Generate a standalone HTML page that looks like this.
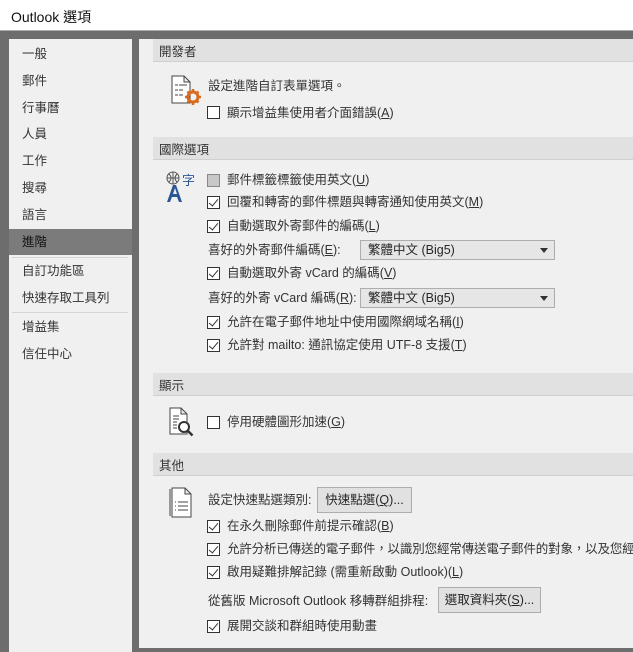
<!DOCTYPE html>
<html><head><meta charset="utf-8"><style>
*{margin:0;padding:0;box-sizing:border-box}
body{width:633px;height:652px;background:#6d6d6d;font-family:"Liberation Sans","Noto Sans CJK TC",sans-serif;font-size:12.5px;color:#262626;position:relative;overflow:hidden}
.abs{position:absolute;white-space:nowrap}
#title{left:0;top:0;width:633px;height:31px;background:#fff;border-bottom:1px solid #aaa}
#title span{position:absolute;left:11px;top:7px;font-size:14px;color:#111}
#side{left:9px;top:39px;width:123px;height:613px;background:#f0f0f0}
.si{position:absolute;left:13px;line-height:16px;color:#333}
#main{left:139px;top:39px;width:494px;height:609px;background:#f0f0f0;overflow:hidden}
.hd{position:absolute;left:14px;width:480px;height:23px;background:#e1e1e1;border-bottom:1px solid #d0d0d0;padding:2px 0 0 6px;color:#333}
.cb{position:absolute;width:13px;height:13px;border:1px solid #333;background:#fff}
.cb.on::after{content:"";position:absolute;left:3px;top:0px;width:4px;height:8px;border:solid #333;border-width:0 1.5px 1.5px 0;transform:rotate(40deg)}
.t{position:absolute;line-height:16px;white-space:nowrap;color:#333}
.dd{position:absolute;left:221px;width:195px;height:20px;background:#e6e6e6;border:1px solid #adadad;padding:0 0 0 7px;line-height:18px}
.dd::after{content:"";position:absolute;right:6px;top:7px;border:4px solid transparent;border-top:5px solid #333}
.btn{position:absolute;background:#e1e1e1;border:1px solid #adadad;text-align:center;line-height:24px}
</style></head><body>
<div id="title" class="abs"><span>Outlook 選項</span></div>
<div id="side" class="abs">
<div class="si" style="top:7px">一般</div>
<div class="si" style="top:34px">郵件</div>
<div class="si" style="top:61px">行事曆</div>
<div class="si" style="top:87px">人員</div>
<div class="si" style="top:114px">工作</div>
<div class="si" style="top:141px">搜尋</div>
<div class="si" style="top:168px">語言</div>
<div style="position:absolute;left:0;top:190px;width:123px;height:26px;background:#7b7b7b"></div>
<div class="si" style="top:195px;color:#111">進階</div>
<div style="position:absolute;left:3px;top:218px;width:116px;height:1px;background:#d4d4d4"></div>
<div class="si" style="top:224px">自訂功能區</div>
<div class="si" style="top:251px">快速存取工具列</div>
<div style="position:absolute;left:3px;top:273px;width:116px;height:1px;background:#d4d4d4"></div>
<div class="si" style="top:280px">增益集</div>
<div class="si" style="top:307px">信任中心</div>
</div>
<div id="main" class="abs">
<div class="hd" style="top:0">開發者</div>
<svg style="position:absolute;left:31px;top:36px" width="35" height="32" viewBox="0 0 35 32"><path d="M2 1h12l6 6v21H2z M14 1v6h6" fill="#fff" stroke="#444"/><path d="M5 10h3M5 15h3M5 20h3M9 10h8M9 15h4M9 20h4" stroke="#444"/><circle cx="23" cy="22" r="5" fill="none" stroke="#d86b1e" stroke-width="3"/><path d="M23 14v3M23 27v3M15 22h3M28 22h3M17.5 16.5l2 2M26.5 25.5l2 2M17.5 27.5l2-2M26.5 18.5l2-2" stroke="#d86b1e" stroke-width="2.5"/></svg>
<div class="t" style="left:69px;top:39px">設定進階自訂表單選項。</div>
<div class="cb" style="left:68px;top:67px"></div><div class="t" style="left:88px;top:66px">顯示增益集使用者介面錯誤(<u>A</u>)</div>

<div class="hd" style="top:98px">國際選項</div>
<svg style="position:absolute;left:25px;top:131px" width="34" height="34" viewBox="0 0 34 34"><circle cx="9" cy="8" r="6" fill="none" stroke="#555"/><path d="M3 8h12M9 2v12M5 4q4 4 0 8M13 4q-4 4 0 8" stroke="#555" fill="none"/><path d="M3 32l6-17h3l6 17h-3l-2-5h-5l-2 5zM9 24h4l-2-6z" fill="#2b5797"/><text x="18" y="15" font-size="13" fill="#2b5797" font-family="Noto Sans CJK TC">字</text></svg>
<div class="cb" style="left:68px;top:135px;background:#c8c8c8;border-color:#888"></div><div class="t" style="left:88px;top:133px">郵件標籤標籤使用英文(<u>U</u>)</div>
<div class="cb on" style="left:68px;top:157px"></div><div class="t" style="left:88px;top:155px">回覆和轉寄的郵件標題與轉寄通知使用英文(<u>M</u>)</div>
<div class="cb on" style="left:68px;top:181px"></div><div class="t" style="left:88px;top:179px">自動選取外寄郵件的編碼(<u>L</u>)</div>
<div class="t" style="left:69px;top:203px">喜好的外寄郵件編碼(<u>E</u>):</div>
<div class="dd" style="top:201px">繁體中文 (Big5)</div>
<div class="cb on" style="left:68px;top:228px"></div><div class="t" style="left:88px;top:226px">自動選取外寄 vCard 的編碼(<u>V</u>)</div>
<div class="t" style="left:69px;top:251px">喜好的外寄 vCard 編碼(<u>R</u>):</div>
<div class="dd" style="top:249px">繁體中文 (Big5)</div>
<div class="cb on" style="left:68px;top:277px"></div><div class="t" style="left:88px;top:275px">允許在電子郵件地址中使用國際網域名稱(<u>I</u>)</div>
<div class="cb on" style="left:68px;top:300px"></div><div class="t" style="left:88px;top:298px">允許對 mailto: 通訊協定使用 UTF-8 支援(<u>T</u>)</div>

<div class="hd" style="top:334px">顯示</div>
<svg style="position:absolute;left:30px;top:368px" width="30" height="32" viewBox="0 0 30 32"><path d="M1 1h11l6 6v20H1z M12 1v6h6" fill="#fff" stroke="#444"/><path d="M4 9h6M4 12h6M4 15h4M4 18h4M4 21h4" stroke="#444"/><circle cx="15" cy="20" r="5" fill="#fff" stroke="#333" stroke-width="2"/><path d="M18.5 23.5l5 5" stroke="#333" stroke-width="2.5"/></svg>
<div class="cb" style="left:68px;top:377px"></div><div class="t" style="left:88px;top:375px">停用硬體圖形加速(<u>G</u>)</div>

<div class="hd" style="top:414px">其他</div>
<svg style="position:absolute;left:29px;top:448px" width="26" height="32" viewBox="0 0 26 32"><path d="M2 2v27M4 1h13l6 6v23H4z M17 1v6h6" fill="#fff" stroke="#444"/><path d="M7 15h1M7 19h1M7 23h1M10 15h10M10 19h10M10 23h10" stroke="#444"/></svg>
<div class="t" style="left:69px;top:453px">設定快速點選類別:</div>
<div class="btn" style="left:178px;top:448px;width:95px;height:26px">快速點選(<u>Q</u>)...</div>
<div class="cb on" style="left:68px;top:481px"></div><div class="t" style="left:88px;top:479px">在永久刪除郵件前提示確認(<u>B</u>)</div>
<div class="cb on" style="left:68px;top:504px"></div><div class="t" style="left:88px;top:502px;letter-spacing:-0.15px">允許分析已傳送的電子郵件，以識別您經常傳送電子郵件的對象，以及您經常</div>
<div class="cb on" style="left:68px;top:527px"></div><div class="t" style="left:88px;top:525px">啟用疑難排解記錄 (需重新啟動 Outlook)(<u>L</u>)</div>
<div class="t" style="left:69px;top:554px">從舊版 Microsoft Outlook 移轉群組排程:</div>
<div class="btn" style="left:299px;top:548px;width:103px;height:26px">選取資料夾(<u>S</u>)...</div>
<div class="cb on" style="left:68px;top:581px"></div><div class="t" style="left:88px;top:579px">展開交談和群組時使用動畫</div>
</div>
</body></html>
